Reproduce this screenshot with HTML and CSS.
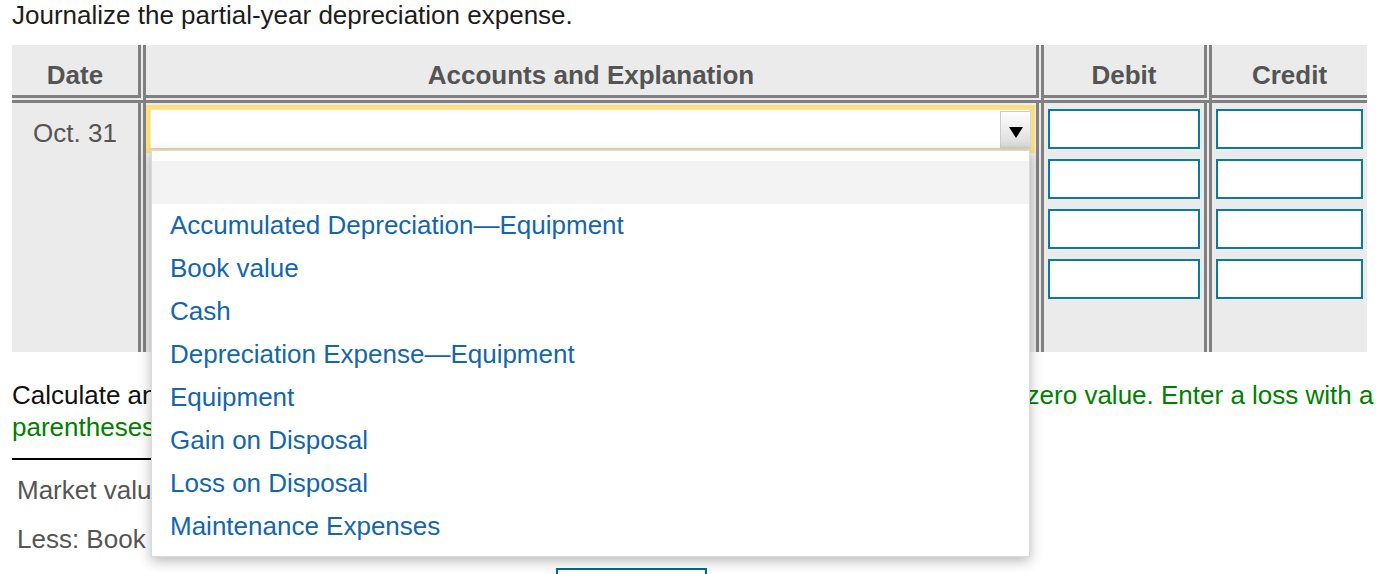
FILE: index.html
```html
<!DOCTYPE html>
<html lang="en">
<head>
<meta charset="utf-8">
<title>Journalize the partial-year depreciation expense</title>
<link rel="stylesheet" href="styles.css">
</head>
<body>
<p class="prompt">Journalize the partial-year depreciation expense.</p>
<table class="journal">
  <thead>
    <tr>
      <th class="col-date">Date</th>
      <th class="col-acct">Accounts and Explanation</th>
      <th class="col-debit">Debit</th>
      <th class="col-credit">Credit</th>
    </tr>
  </thead>
  <tbody>
    <tr>
      <td class="cell-date">Oct. 31</td>
      <td class="cell-acct">
        <div class="combo">
          <div class="combo-field">
            <span class="combo-value"></span>
            <span class="combo-btn"><svg class="combo-arrow" width="14" height="11" viewBox="0 0 14 11"><polygon points="0,0 14,0 7,11" fill="#000"/></svg></span>
          </div>
          <ul class="combo-list">
            <li class="opt opt-blank"></li>
            <li class="opt">Accumulated Depreciation—Equipment</li>
            <li class="opt">Book value</li>
            <li class="opt">Cash</li>
            <li class="opt">Depreciation Expense—Equipment</li>
            <li class="opt">Equipment</li>
            <li class="opt">Gain on Disposal</li>
            <li class="opt">Loss on Disposal</li>
            <li class="opt">Maintenance Expenses</li>
          </ul>
        </div>
      </td>
      <td class="cell-amt"><input class="amt-box" type="text"></td>
      <td class="cell-amt"><input class="amt-box" type="text"></td>
    </tr>
    <tr>
      <td class="cell-date"></td>
      <td class="cell-acct"></td>
      <td class="cell-amt"><input class="amt-box" type="text"></td>
      <td class="cell-amt"><input class="amt-box" type="text"></td>
    </tr>
    <tr>
      <td class="cell-date"></td>
      <td class="cell-acct"></td>
      <td class="cell-amt"><input class="amt-box" type="text"></td>
      <td class="cell-amt"><input class="amt-box" type="text"></td>
    </tr>
    <tr class="row-last">
      <td class="cell-date"></td>
      <td class="cell-acct"></td>
      <td class="cell-amt"><input class="amt-box" type="text"></td>
      <td class="cell-amt"><input class="amt-box" type="text"></td>
    </tr>
  </tbody>
</table>
<p class="instr">Calculate and enter the gain or loss on disposal. <span class="hint">(If there is no gain or loss, then enter a zero value. Enter a loss with a minus sign or in parentheses.)</span></p>
<div class="calc">
  <div class="calc-row"><span class="calc-label">Market value of equipment</span><input class="amt-box calc-box" type="text"></div>
  <div class="calc-row"><span class="calc-label">Less: Book value of equipment</span><input class="amt-box calc-box" type="text"></div>
  <div class="calc-row"><span class="calc-label">Gain (loss) on disposal</span><input class="amt-box calc-box" type="text"></div>
</div>
</body>
</html>
```
FILE: styles.css
```css
* {
  box-sizing: border-box;
}

html {
  overflow: hidden;
}

body {
  margin: 0;
  padding: 0 0 0 12px;
  font-family: "Liberation Sans", Arial, Helvetica, sans-serif;
  font-size: 26px;
  color: #1c1c1c;
  background: #fff;
}

.prompt {
  margin: 0;
  line-height: 30px;
}

/* ---------- Journal table ---------- */
.journal {
  margin-top: 15px;
  width: 1355px;
  table-layout: fixed;
  border-collapse: separate;
  border-spacing: 0;
  background: #ebebeb;
}

.journal th {
  padding: 15px 0 5px;
  line-height: 30px;
  font-weight: bold;
  color: #545454;
  text-align: center;
  vertical-align: top;
  border-bottom: 8px double #808080;
}

.journal th,
.journal td {
  border-right: 8px double #808080;
}

.journal th:last-child,
.journal td:last-child {
  border-right: 0;
}

.col-date { width: 134px; }
.col-acct { width: 898px; }
.col-debit { width: 168px; }
.col-credit { width: 155px; }

.journal td {
  padding: 0;
  vertical-align: top;
  line-height: 30px;
}

.journal .cell-date {
  padding: 15px 0 5px;
  text-align: center;
  color: #555;
}

.journal .cell-acct {
  padding: 2px 1px 0 0;
}

.journal .cell-amt {
  padding: 6px 4px 4px;
}

.journal .row-last .cell-amt {
  padding-bottom: 53px;
}

.amt-box {
  display: block;
  width: 100%;
  height: 40px;
  margin: 0;
  padding: 0 6px;
  border: 2px solid #0b7a9c;
  border-radius: 0;
  background: #fff;
  font: inherit;
  outline: none;
}

/* ---------- Combo box ---------- */
.combo {
  position: relative;
  padding: 4px;
  background: #f9e07b;
}

.combo-field {
  display: flex;
  height: 40px;
  border: 1px solid #d6d6d6;
  border-top-color: #f3e6b0;
  border-left-color: #f3e6b0;
  background: #fff;
  box-shadow: inset 0 4px 6px -3px #f3f3f3;
}

.combo-value {
  flex: 1;
}

.combo-btn {
  display: flex;
  justify-content: center;
  align-items: center;
  width: 30px;
  margin: 1px 0 0;
  border: 1px solid #cccccc;
  border-right: 0;
  background: linear-gradient(#fdfdfd, #e9e9e9 60%, #d9d9d9);
}

.combo-arrow {
  margin-top: 5px;
}

.combo-list {
  position: absolute;
  top: 45px;
  left: 5px;
  right: 5px;
  z-index: 10;
  margin: 0;
  padding: 10px 0 8px;
  list-style: none;
  background: #fff;
  border: 1px solid #dadada;
  box-shadow: 0 4px 12px rgba(0, 0, 0, 0.28);
}

.opt {
  height: 43px;
  padding-left: 18px;
  line-height: 43px;
  color: #1466ab;
  white-space: nowrap;
}

.opt-blank {
  background: #f3f3f3;
}

/* ---------- Instructions & calculation ---------- */
.instr {
  width: 1620px;
  margin: 27px 0 0;
  line-height: 32px;
  color: #111;
}

.hint {
  color: #008000;
}

.calc {
  width: 710px;
  margin-top: 15px;
  padding-top: 4px;
  border-top: 2px solid #000;
}

.calc-row {
  display: flex;
  align-items: center;
  height: 49px;
}

.calc-label {
  width: 544px;
  padding: 3px 0 0 5px;
  color: #555;
  white-space: nowrap;
  overflow: hidden;
}

.calc-box {
  width: 151px;
  height: 38px;
  border-color: #006a8c;
}
```
